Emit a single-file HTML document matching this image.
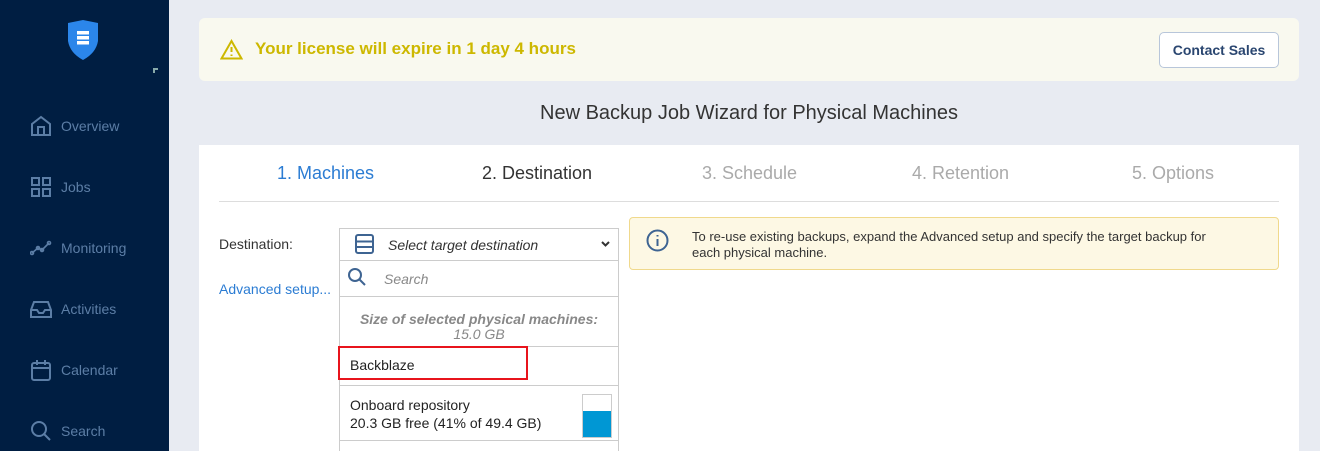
<!DOCTYPE html>
<html><head><meta charset="utf-8"><style>
*{box-sizing:border-box;margin:0;padding:0}
body{width:1320px;height:451px;overflow:hidden;background:#e8ebf2;font-family:"Liberation Sans",sans-serif;position:relative}
.sb{position:absolute;left:0;top:0;width:169px;height:451px;background:#001e42}
.nav{position:absolute;left:30px;color:#5c7ea6;font-size:14px;display:flex;align-items:center}
.nav svg{width:22px;height:22px;margin-right:9px}
.abs{position:absolute}
</style></head><body>
<div class="sb">
<svg class="abs" style="left:66px;top:19px" width="34" height="42" viewBox="0 0 34 42"><path d="M2 4 L17 1 L32 4 L32 22 Q30 34 17 41 Q4 34 2 22Z" fill="#2b86ea"/><rect x="11" y="12" width="12" height="3.5" fill="#fff"/><rect x="11" y="17" width="12" height="3.5" fill="#fff"/><rect x="11" y="22" width="12" height="3.5" fill="#fff"/></svg>
<div class="abs" style="left:153px;top:68px;width:5px;height:5px;border-left:2px solid #8aa;border-top:2px solid #8aa"></div>
<div class="nav" style="top:115px"><svg viewBox="0 0 22 22" fill="none" stroke="#5c7ea6" stroke-width="2"><path d="M2 9 L11 2 L20 9 V20 H2Z M8 20 V12 H14 V20"/></svg>Overview</div>
<div class="nav" style="top:176px"><svg viewBox="0 0 22 22" fill="none" stroke="#5c7ea6" stroke-width="2"><rect x="2" y="2" width="7" height="7"/><rect x="13" y="2" width="7" height="7"/><rect x="2" y="13" width="7" height="7"/><rect x="13" y="13" width="7" height="7"/></svg>Jobs</div>
<div class="nav" style="top:237px"><svg viewBox="0 0 22 22" fill="none" stroke="#5c7ea6" stroke-width="1.6"><path d="M2 16 L8 11 L12 13 L19 6"/><circle cx="2" cy="16" r="1.5"/><circle cx="8" cy="11" r="1.5"/><circle cx="12" cy="13" r="1.5"/><circle cx="19" cy="6" r="1.5"/></svg>Monitoring</div>
<div class="nav" style="top:298px"><svg viewBox="0 0 22 22" fill="none" stroke="#5c7ea6" stroke-width="2"><path d="M1 12 L4 4 H18 L21 12 V19 H1Z M1 12 H7 L9 15 H13 L15 12 H21"/></svg>Activities</div>
<div class="nav" style="top:359px"><svg viewBox="0 0 22 22" fill="none" stroke="#5c7ea6" stroke-width="2"><rect x="2" y="4" width="18" height="17" rx="2"/><path d="M2 9 H20 M7 1 V6 M15 1 V6"/></svg>Calendar</div>
<div class="nav" style="top:420px"><svg viewBox="0 0 22 22" fill="none" stroke="#5c7ea6" stroke-width="2"><circle cx="9" cy="9" r="7"/><path d="M14 14 L20 20"/></svg>Search</div>
</div>
<div class="abs" style="left:199px;top:18px;width:1100px;height:63px;background:#f9f9ef;border-radius:6px"></div>
<svg class="abs" style="left:220px;top:39px" width="23" height="21" viewBox="0 0 23 21" fill="none" stroke="#cdb800" stroke-width="2"><path d="M11.5 2 L21.5 19.5 H1.5Z"/><path d="M11.5 8 V13 M11.5 15.5 V17"/></svg>
<div class="abs" style="left:255px;top:39px;font-size:17px;font-weight:bold;color:#cdb800">Your license will expire in 1 day 4 hours</div>
<div class="abs" style="left:1159px;top:32px;width:120px;height:36px;background:#fff;border:1px solid #b8c6da;border-radius:5px;font-size:14px;font-weight:bold;color:#2a4670;text-align:center;line-height:34px">Contact Sales</div>
<div class="abs" style="left:199px;top:102px;width:1100px;text-align:center;font-size:20px;color:#333">New Backup Job Wizard for Physical Machines</div>
<div class="abs" style="left:199px;top:145px;width:1100px;height:306px;background:#fff"></div>
<div class="abs" style="top:163px;font-size:18px;color:#2b7cd3;left:277px">1. Machines</div>
<div class="abs" style="top:163px;font-size:18px;color:#333;left:482px">2. Destination</div>
<div class="abs" style="top:163px;font-size:18px;color:#aaa;left:702px">3. Schedule</div>
<div class="abs" style="top:163px;font-size:18px;color:#aaa;left:912px">4. Retention</div>
<div class="abs" style="top:163px;font-size:18px;color:#aaa;left:1132px">5. Options</div>
<div class="abs" style="left:219px;top:201px;width:1060px;height:1px;background:#ddd"></div>
<div class="abs" style="left:219px;top:236px;font-size:14px;color:#333">Destination:</div>
<div class="abs" style="left:219px;top:281px;font-size:14px;color:#2b7cd3">Advanced setup...</div>
<div class="abs" style="left:339px;top:228px;width:280px;height:223px;border:1px solid #ccc;border-bottom:none;background:#fff"></div>
<svg class="abs" style="left:355px;top:234px" width="19" height="20" viewBox="0 0 19 20" fill="none" stroke="#3e6492" stroke-width="2"><rect x="1" y="1" width="17" height="18" rx="2"/><path d="M1 7.5 H18 M1 13 H18"/></svg>
<div class="abs" style="left:388px;top:237px;font-size:14px;font-style:italic;color:#333">Select target destination</div>
<svg class="abs" style="left:601px;top:241px" width="9" height="6" viewBox="0 0 9 6" fill="none" stroke="#333" stroke-width="2"><path d="M1 1 L4.5 4.5 L8 1"/></svg>
<div class="abs" style="left:340px;top:260px;width:278px;height:1px;background:#ccc"></div>
<svg class="abs" style="left:347px;top:267px" width="20" height="20" viewBox="0 0 20 20" fill="none" stroke="#3e6492" stroke-width="2"><circle cx="8" cy="8" r="6"/><path d="M12.5 12.5 L18 18"/></svg>
<div class="abs" style="left:384px;top:271px;font-size:14px;font-style:italic;color:#888">Search</div>
<div class="abs" style="left:340px;top:296px;width:278px;height:1px;background:#ccc"></div>
<div class="abs" style="left:340px;top:311px;width:278px;text-align:center;font-size:14px;font-style:italic;font-weight:bold;color:#888">Size of selected physical machines:</div>
<div class="abs" style="left:340px;top:326px;width:278px;text-align:center;font-size:14px;font-style:italic;color:#888">15.0 GB</div>
<div class="abs" style="left:340px;top:346px;width:278px;height:1px;background:#ccc"></div>
<div class="abs" style="left:338px;top:346px;width:190px;height:34px;border:2px solid #e8141c"></div>
<div class="abs" style="left:350px;top:357px;font-size:14px;color:#222">Backblaze</div>
<div class="abs" style="left:340px;top:385px;width:278px;height:1px;background:#ccc"></div>
<div class="abs" style="left:350px;top:396px;font-size:14px;color:#222;line-height:18px">Onboard repository<br>20.3 GB free (41% of 49.4 GB)</div>
<div class="abs" style="left:582px;top:394px;width:30px;height:44px;border:1px solid #ccc;background:#fff"><div style="position:absolute;left:0;right:0;bottom:0;height:26px;background:#0097d4"></div></div>
<div class="abs" style="left:340px;top:440px;width:278px;height:1px;background:#ccc"></div>
<div class="abs" style="left:629px;top:217px;width:650px;height:53px;background:#fdf8e4;border:1px solid #f0d98c;border-radius:4px"></div>
<svg class="abs" style="left:646px;top:229px" width="23" height="23" viewBox="0 0 23 23" fill="none" stroke="#3e6492" stroke-width="2"><circle cx="11.5" cy="11.5" r="10"/><path d="M11.5 10 V17 M11.5 6 V7.5"/></svg>
<div class="abs" style="left:692px;top:229px;font-size:13px;color:#333;line-height:16px">To re-use existing backups, expand the Advanced setup and specify the target backup for<br>each physical machine.</div>
</body></html>
